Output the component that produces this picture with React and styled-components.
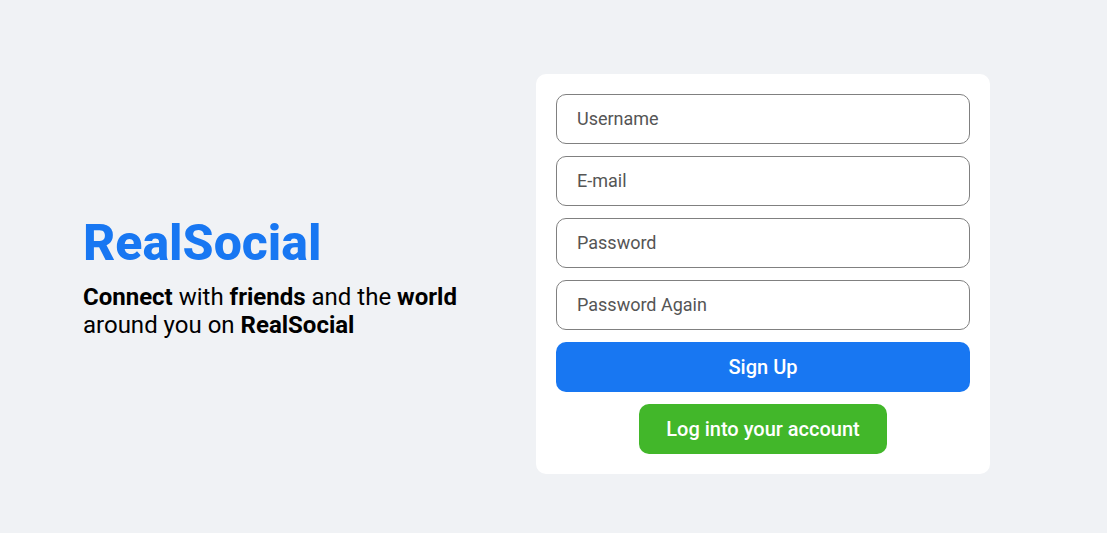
import React from "react";
import styled, { createGlobalStyle } from "styled-components";

const Global = createGlobalStyle`
  html, body { margin: 0; padding: 0; background: #f0f2f5; }
  body { font-family: Roboto, "Noto Sans", sans-serif; }
  * { box-sizing: border-box; }
`;

const Page = styled.div`
  width: 1107px;
  height: 533px;
  background: #f0f2f5;
  display: flex;
  align-items: flex-start;
  padding: 74px 0 0 83px;
`;

const Wrapper = styled.div`
  width: 907px;
  display: flex;
`;

const Left = styled.div`
  flex: 1;
  display: flex;
  flex-direction: column;
  justify-content: center;
  padding-top: 4px;
`;

const Logo = styled.h3`
  margin: 0 0 10px;
  font-size: 50px;
  font-weight: 800;
  color: #1877f2;
  line-height: 1.2;
`;

const Desc = styled.span`
  font-size: 24px;
  line-height: 28px;
  color: #000;
  b { font-weight: 700; }
`;

const Right = styled.div`
  flex: 1;
  display: flex;
`;

const Box = styled.form`
  width: 454px;
  height: 400px;
  padding: 20px;
  background: #fff;
  border-radius: 10px;
  display: flex;
  flex-direction: column;
  gap: 12px;
`;

const Input = styled.input`
  height: 50px;
  border-radius: 10px;
  border: 1px solid gray;
  font-size: 18px;
  padding: 0 0 2px 20px;
  font-family: Roboto, sans-serif;
  outline: none;
  &::placeholder { color: #555; }
`;

const Button = styled.button`
  height: 50px;
  border-radius: 10px;
  border: none;
  background: ${(p) => p.$bg};
  color: #fff;
  font-size: 20px;
  font-weight: 500;
  font-family: Roboto, sans-serif;
  cursor: pointer;
  width: ${(p) => p.$w || "100%"};
  align-self: center;
`;

export default function App() {
  return (
    <>
      <Global />
      <Page>
        <Wrapper>
          <Left>
            <Logo>RealSocial</Logo>
            <Desc>
              <b>Connect</b> with <b>friends</b> and the <b>world</b>
              <br />
              around you on <b>RealSocial</b>
            </Desc>
          </Left>
          <Right>
            <Box onSubmit={(e) => e.preventDefault()}>
              <Input placeholder="Username" />
              <Input placeholder="E-mail" type="email" />
              <Input placeholder="Password" type="password" />
              <Input placeholder="Password Again" type="password" />
              <Button $bg="#1877f2" type="submit">Sign Up</Button>
              <Button $bg="#42b72a" $w="248px" type="button">Log into your account</Button>
            </Box>
          </Right>
        </Wrapper>
      </Page>
    </>
  );
}
